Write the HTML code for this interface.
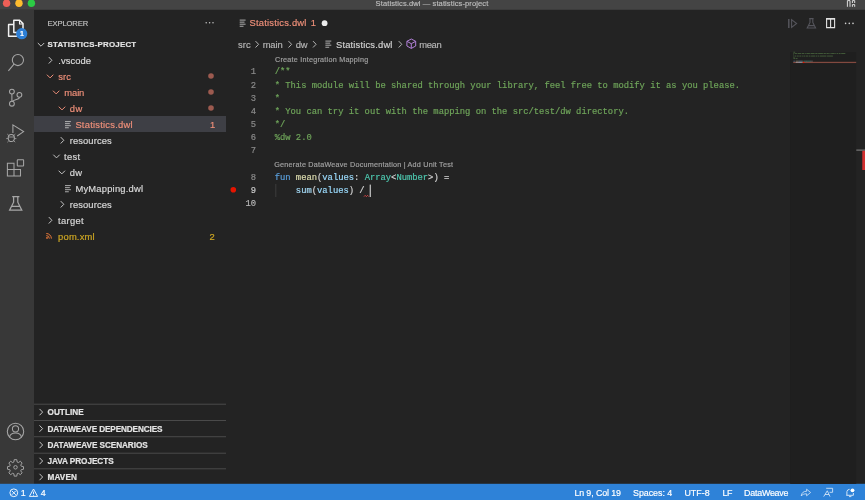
<!DOCTYPE html>
<html><head><meta charset="utf-8">
<style>
*{margin:0;padding:0;box-sizing:border-box}
html,body{width:865px;height:500px;overflow:hidden;background:#232323}
body{position:relative;font-family:"Liberation Sans",sans-serif;font-size:9.4px;color:#ccc}
.a{position:absolute;white-space:pre;line-height:12px;-webkit-text-stroke:0.18px currentColor}
.m{font-family:"Liberation Mono",monospace}
#tx{position:absolute;left:0;top:0;width:865px;height:500px;will-change:transform}
svg{position:absolute;left:0;top:0}
</style></head><body>
<svg width="865" height="500" viewBox="0 0 865 500">
<rect x="0" y="0" width="865" height="9.8" fill="#444444"/>
<rect x="0" y="9.8" width="34" height="475" fill="#383838"/>
<rect x="34" y="116" width="192" height="16" fill="#3e3f45"/>
<rect x="0" y="483.8" width="865" height="16.2" fill="#2e82d8"/>
<rect x="790.2" y="52" width="66" height="431.8" fill="#1f1f1f"/>
<circle cx="6.6" cy="3.2" r="3.7" fill="#ee5f57"/>
<circle cx="19" cy="3.2" r="3.7" fill="#fdbc2e"/>
<circle cx="31.4" cy="3.2" r="3.7" fill="#2ccb45"/>
<path d="M847.4 6.8V0.6H850V6.8 M852.4 6.8V4.6H854.7V6.8 M852.4 3V0.6H854.7V3" fill="none" stroke="#dcdcdc" stroke-width="1"/>
<circle cx="206.2" cy="22.8" r="0.75" fill="#c5c5c5"/>
<circle cx="209.6" cy="22.8" r="0.75" fill="#c5c5c5"/>
<circle cx="213" cy="22.8" r="0.75" fill="#c5c5c5"/>
<path d="M37.8 43.0L41 46.2L44.2 43.0" fill="none" stroke="#c5c5c5" stroke-width="1.0"/>
<path d="M48.8 57.099999999999994L51.9 60.3L48.8 63.5" fill="none" stroke="#c5c5c5" stroke-width="1.0"/>
<path d="M46.9 74.7L50.1 77.89999999999999L53.300000000000004 74.7" fill="none" stroke="#ee8f79" stroke-width="1.0"/>
<path d="M53.0 90.7L56.2 93.89999999999999L59.400000000000006 90.7" fill="none" stroke="#ee8f79" stroke-width="1.0"/>
<path d="M58.8 106.7L62 109.89999999999999L65.2 106.7" fill="none" stroke="#ee8f79" stroke-width="1.0"/>
<path d="M65 121.6H70.9 M65 123.64999999999999H69.8 M65 125.7H70.9 M65 127.75H68.8" fill="none" stroke="#c5c5c5" stroke-width="0.85"/>
<path d="M60.7 137.10000000000002L63.800000000000004 140.3L60.7 143.5" fill="none" stroke="#c5c5c5" stroke-width="1.0"/>
<path d="M53.3 154.70000000000002L56.5 157.9L59.7 154.70000000000002" fill="none" stroke="#c5c5c5" stroke-width="1.0"/>
<path d="M58.599999999999994 170.70000000000002L61.8 173.9L65.0 170.70000000000002" fill="none" stroke="#c5c5c5" stroke-width="1.0"/>
<path d="M65 185.60000000000002H70.9 M65 187.65H69.8 M65 189.70000000000002H70.9 M65 191.75H68.8" fill="none" stroke="#c5c5c5" stroke-width="0.85"/>
<path d="M60.7 201.10000000000002L63.800000000000004 204.3L60.7 207.5" fill="none" stroke="#c5c5c5" stroke-width="1.0"/>
<path d="M48.8 217.10000000000002L51.9 220.3L48.8 223.5" fill="none" stroke="#c5c5c5" stroke-width="1.0"/>
<circle cx="47" cy="237.9" r="0.9" fill="#e8793a"/><path d="M46.3 235.6A3 3 0 0 1 49.3 238.6 M46.3 233.5A5.1 5.1 0 0 1 51.4 238.6" fill="none" stroke="#e8793a" stroke-width="1"/>
<circle cx="211" cy="76" r="2.8" fill="#9c5a4f"/>
<circle cx="211" cy="92" r="2.8" fill="#9c5a4f"/>
<circle cx="211" cy="108" r="2.8" fill="#9c5a4f"/>
<rect x="34" y="403.7" width="192" height="1" fill="#4a4a4a"/>
<path d="M39.5 408.90000000000003L42.6 412.1L39.5 415.3" fill="none" stroke="#c5c5c5" stroke-width="1.0"/>
<rect x="34" y="420.0" width="192" height="1" fill="#4a4a4a"/>
<path d="M39.5 425.40000000000003L42.6 428.6L39.5 431.8" fill="none" stroke="#c5c5c5" stroke-width="1.0"/>
<rect x="34" y="436.2" width="192" height="1" fill="#4a4a4a"/>
<path d="M39.5 441.8L42.6 445L39.5 448.2" fill="none" stroke="#c5c5c5" stroke-width="1.0"/>
<rect x="34" y="452.7" width="192" height="1" fill="#4a4a4a"/>
<path d="M39.5 457.8L42.6 461L39.5 464.2" fill="none" stroke="#c5c5c5" stroke-width="1.0"/>
<rect x="34" y="468.3" width="192" height="1" fill="#4a4a4a"/>
<path d="M39.5 473.8L42.6 477L39.5 480.2" fill="none" stroke="#c5c5c5" stroke-width="1.0"/>
<g fill="none" stroke="#f2f2f2" stroke-width="1.5" stroke-linejoin="round">
<path d="M13.8 20.3H19.7L23 23.6V32.6H13.8Z"/><path d="M19.5 20.5V24H22.8" stroke-width="1.1"/>
<path d="M13.6 24.5H8.6V36.2H17.3V32.9"/></g>
<circle cx="21.7" cy="33.7" r="5.6" fill="#2d7fd6"/>
<g fill="none" stroke="#a6a6a6" stroke-width="1.05">
<circle cx="17.9" cy="60" r="5.6"/><path d="M14 64.2L8.4 70.8"/>
<circle cx="11.9" cy="91.6" r="2.4"/><circle cx="19.4" cy="94.8" r="2.4"/><circle cx="11.9" cy="103.7" r="2.4"/>
<path d="M11.9 94V101.3 M19.4 97.2C19.4 100 15 99 12.5 101.4"/>
<path d="M12.9 133V124.9L23.6 131.6L17.2 136"/>
<ellipse cx="11.3" cy="138" rx="3.1" ry="3.6"/><path d="M8.4 137H14.2 M8.2 138.6H6.2 M14.4 138.6H16.4 M8.8 135.5L7.3 134.1 M13.8 135.5L15.3 134.1 M8.8 140.8L7.4 142.2 M13.8 140.8L15.2 142.2" stroke-width="0.8"/>
<path d="M7.4 163.3H14V169.5H20.5V176H7.4Z M7.4 169.5H14V176"/>
<rect x="17.3" y="159.8" width="6.3" height="6.2" rx="0.5"/>
<path d="M12.2 196.6H19.4 M13.6 196.6V202.2L9.6 210.2H21.8L17.8 202.2V196.6 M11.5 206.4H19.9" stroke-width="1.25"/>
<circle cx="15.5" cy="431.5" r="8.2"/><circle cx="15.5" cy="428.8" r="3.1"/><path d="M9.6 437.2C10.4 431.6 20.6 431.6 21.4 437.2"/>
<g transform="translate(15.5 467.3) scale(0.92) translate(-15.5 -467)"><circle cx="15.5" cy="467" r="1.9"/>
<path d="M14.1 458.7H16.9L17.3 461.3L18.6 461.9L20.8 460.4L22.7 462.4L21.2 464.6L21.7 465.8L24.2 466.3V469.1L21.7 469.6L21.2 470.9L22.7 473L20.8 475L18.6 473.5L17.3 474L16.9 476.6H14.1L13.7 474L12.4 473.5L10.2 475L8.3 473L9.8 470.9L9.3 469.6L6.8 469.1V466.3L9.3 465.8L9.8 464.6L8.3 462.4L10.2 460.4L12.4 461.9L13.7 461.3Z" stroke-width="1.05"/></g>
</g>
<g fill="none" stroke="#fff" stroke-width="0.9">
<circle cx="13.8" cy="492.8" r="3.9"/><path d="M11.8 490.8L15.8 494.8 M15.8 490.8L11.8 494.8"/>
<path d="M33.5 489L37.6 496.4H29.4Z M33.5 491.6V494 M33.5 494.8V495.6"/>
<g opacity="0.82"><path d="M801.2 496C801.6 492.8 803.4 491.3 806.6 491.3V489.2L810.6 492.5L806.6 495.8V493.8C804 493.8 802.4 494.4 801.2 496Z" stroke-width="0.8"/>
<path d="M826.2 488.3H832.6V492.3H829.6 M827.3 490.8L823.7 496.6 M827.3 490.8L830 496.6 M825 494.5H829" stroke-width="0.85"/>
<path d="M846.9 495.3V491.6A3 2.6 0 0 1 849.6 489.3 M853.4 493V495.3H846.3 M849 496.6H851.4" stroke-width="0.95"/></g>
</g><circle cx="852.5" cy="490.3" r="1.9" fill="#fff"/>
<path d="M239.7 20.1H245.6 M239.7 22.150000000000002H244.5 M239.7 24.2H245.6 M239.7 26.25H243.5" fill="none" stroke="#c5c5c5" stroke-width="0.85"/>
<circle cx="324.6" cy="23.2" r="2.9" fill="#ececec"/>
<g fill="none" stroke="#55555c" stroke-width="1.1"><path d="M788.8 19V27.9" stroke-width="1.5"/><path d="M791.6 19.6L796.6 23.5L791.6 27.4Z"/><path d="M809.2 18.6H813.6 M810 18.6V22.4L807.2 28H815.6L812.8 22.4V18.6 M808.3 25.6H814.5"/></g>
<path d="M826.6 18.6H834.6V27.6H826.6Z M830.6 18.6V27.6" fill="none" stroke="#e2e2e2" stroke-width="1.1"/><path d="M826.6 18.9H834.6" stroke="#e2e2e2" stroke-width="1.4"/>
<circle cx="845.6" cy="23.4" r="0.8" fill="#d0d0d0"/>
<circle cx="849.3" cy="23.4" r="0.8" fill="#d0d0d0"/>
<circle cx="853" cy="23.4" r="0.8" fill="#d0d0d0"/>
<path d="M255.5 41.099999999999994L258.6 44.3L255.5 47.5" fill="none" stroke="#b4b4b4" stroke-width="1.0"/>
<path d="M288.5 41.099999999999994L291.6 44.3L288.5 47.5" fill="none" stroke="#b4b4b4" stroke-width="1.0"/>
<path d="M313.0 41.099999999999994L316.1 44.3L313.0 47.5" fill="none" stroke="#b4b4b4" stroke-width="1.0"/>
<path d="M325.4 41.099999999999994H331.29999999999995 M325.4 43.15H330.2 M325.4 45.199999999999996H331.29999999999995 M325.4 47.25H329.2" fill="none" stroke="#c5c5c5" stroke-width="0.85"/>
<path d="M398.7 41.099999999999994L401.8 44.3L398.7 47.5" fill="none" stroke="#b4b4b4" stroke-width="1.0"/>
<path d="M411.3 39L415.7 41.3V46L411.3 48.4L406.9 46V41.3Z M406.9 41.3L411.3 43.7L415.7 41.3 M411.3 43.7V48.4" fill="none" stroke="#b180d7" stroke-width="1"/>
<circle cx="233.3" cy="189.8" r="2.8" fill="#e51400"/>
<rect x="275.3" y="184" width="1" height="13" fill="#3d3d3d"/>
<rect x="369.7" y="184.6" width="1.1" height="12.4" fill="#d8d8d8"/>
<path d="M364 196.6L365.2 195.4L366.4 196.6L367.6 195.4L368.8 196.6" fill="none" stroke="#f14c4c" stroke-width="0.9"/>
<rect x="793.2" y="61.8" width="63" height="1.25" fill="#82493f"/>
<rect x="793.40" y="51.75" width="1.77" height="0.95" fill="#6fa55a" opacity="0.45"/>
<rect x="793.40" y="53.02" width="0.59" height="0.95" fill="#6fa55a" opacity="0.45"/>
<rect x="794.58" y="53.02" width="2.36" height="0.95" fill="#6fa55a" opacity="0.45"/>
<rect x="797.53" y="53.02" width="3.54" height="0.95" fill="#6fa55a" opacity="0.45"/>
<rect x="801.66" y="53.02" width="2.36" height="0.95" fill="#6fa55a" opacity="0.45"/>
<rect x="804.61" y="53.02" width="1.18" height="0.95" fill="#6fa55a" opacity="0.45"/>
<rect x="806.38" y="53.02" width="3.54" height="0.95" fill="#6fa55a" opacity="0.45"/>
<rect x="810.51" y="53.02" width="4.13" height="0.95" fill="#6fa55a" opacity="0.45"/>
<rect x="815.23" y="53.02" width="2.36" height="0.95" fill="#6fa55a" opacity="0.45"/>
<rect x="818.18" y="53.02" width="4.72" height="0.95" fill="#6fa55a" opacity="0.45"/>
<rect x="823.49" y="53.02" width="2.36" height="0.95" fill="#6fa55a" opacity="0.45"/>
<rect x="826.44" y="53.02" width="2.36" height="0.95" fill="#6fa55a" opacity="0.45"/>
<rect x="829.39" y="53.02" width="1.18" height="0.95" fill="#6fa55a" opacity="0.45"/>
<rect x="831.16" y="53.02" width="3.54" height="0.95" fill="#6fa55a" opacity="0.45"/>
<rect x="835.29" y="53.02" width="1.18" height="0.95" fill="#6fa55a" opacity="0.45"/>
<rect x="837.06" y="53.02" width="1.18" height="0.95" fill="#6fa55a" opacity="0.45"/>
<rect x="838.83" y="53.02" width="1.77" height="0.95" fill="#6fa55a" opacity="0.45"/>
<rect x="841.19" y="53.02" width="4.13" height="0.95" fill="#6fa55a" opacity="0.45"/>
<rect x="793.40" y="54.30" width="0.59" height="0.95" fill="#6fa55a" opacity="0.45"/>
<rect x="793.40" y="55.58" width="0.59" height="0.95" fill="#6fa55a" opacity="0.45"/>
<rect x="794.58" y="55.58" width="1.77" height="0.95" fill="#6fa55a" opacity="0.45"/>
<rect x="796.94" y="55.58" width="1.77" height="0.95" fill="#6fa55a" opacity="0.45"/>
<rect x="799.30" y="55.58" width="1.77" height="0.95" fill="#6fa55a" opacity="0.45"/>
<rect x="801.66" y="55.58" width="1.18" height="0.95" fill="#6fa55a" opacity="0.45"/>
<rect x="803.43" y="55.58" width="1.77" height="0.95" fill="#6fa55a" opacity="0.45"/>
<rect x="805.79" y="55.58" width="2.36" height="0.95" fill="#6fa55a" opacity="0.45"/>
<rect x="808.74" y="55.58" width="1.77" height="0.95" fill="#6fa55a" opacity="0.45"/>
<rect x="811.10" y="55.58" width="4.13" height="0.95" fill="#6fa55a" opacity="0.45"/>
<rect x="815.82" y="55.58" width="1.18" height="0.95" fill="#6fa55a" opacity="0.45"/>
<rect x="817.59" y="55.58" width="1.77" height="0.95" fill="#6fa55a" opacity="0.45"/>
<rect x="819.95" y="55.58" width="6.49" height="0.95" fill="#6fa55a" opacity="0.45"/>
<rect x="827.03" y="55.58" width="5.90" height="0.95" fill="#6fa55a" opacity="0.45"/>
<rect x="793.40" y="56.85" width="1.18" height="0.95" fill="#6fa55a" opacity="0.45"/>
<rect x="793.40" y="58.12" width="1.77" height="0.95" fill="#6fa55a" opacity="0.45"/>
<rect x="795.76" y="58.12" width="1.77" height="0.95" fill="#6fa55a" opacity="0.45"/>
<rect x="793.40" y="60.67" width="1.77" height="0.95" fill="#5a9fdc" opacity="0.45"/>
<rect x="795.76" y="60.67" width="2.36" height="0.95" fill="#dedeb0" opacity="0.45"/>
<rect x="798.12" y="60.67" width="0.59" height="0.95" fill="#d4d4d4" opacity="0.45"/>
<rect x="798.71" y="60.67" width="3.54" height="0.95" fill="#9cdcfe" opacity="0.45"/>
<rect x="802.25" y="60.67" width="0.59" height="0.95" fill="#d4d4d4" opacity="0.45"/>
<rect x="803.43" y="60.67" width="2.95" height="0.95" fill="#4ec9b0" opacity="0.45"/>
<rect x="806.38" y="60.67" width="0.59" height="0.95" fill="#d4d4d4" opacity="0.45"/>
<rect x="806.97" y="60.67" width="3.54" height="0.95" fill="#4ec9b0" opacity="0.45"/>
<rect x="810.51" y="60.67" width="1.18" height="0.95" fill="#d4d4d4" opacity="0.45"/>
<rect x="812.28" y="60.67" width="0.59" height="0.95" fill="#d4d4d4" opacity="0.45"/>
<rect x="795.76" y="61.95" width="1.77" height="0.95" fill="#a6dcf8" opacity="0.45"/>
<rect x="797.53" y="61.95" width="0.59" height="0.95" fill="#d4d4d4" opacity="0.45"/>
<rect x="798.12" y="61.95" width="3.54" height="0.95" fill="#9cdcfe" opacity="0.45"/>
<rect x="801.66" y="61.95" width="0.59" height="0.95" fill="#d4d4d4" opacity="0.45"/>
<rect x="802.84" y="61.95" width="0.59" height="0.95" fill="#d4d4d4" opacity="0.45"/>
<rect x="803" y="61.8" width="1.3" height="1.25" fill="#e51400"/>
<rect x="856.3" y="149.6" width="8.7" height="1" fill="#8a8a8a"/><rect x="862.3" y="150.8" width="2.7" height="19.2" fill="#d22f2f"/>
</svg>
<div id="tx">
<div class="a" style="top:-2.00px;font-size:7.5px;color:#bcbcbc;left:375.60px;letter-spacing:0.114px;">Statistics.dwl — statistics-project</div>
<div class="a" style="top:18.00px;font-size:7.6px;color:#c0c0c0;left:47.50px;letter-spacing:-0.101px;">EXPLORER</div>
<div class="a" style="top:39.00px;font-size:7.9px;color:#e4e4e4;font-weight:bold;left:47.50px;letter-spacing:0.231px;">STATISTICS-PROJECT</div>
<div class="a" style="top:55.00px;font-size:9.4px;color:#d8d8d8;left:58.30px;letter-spacing:0.060px;">.vscode</div>
<div class="a" style="top:71.00px;font-size:9.4px;color:#ee8f79;left:58.30px;letter-spacing:0.080px;">src</div>
<div class="a" style="top:87.00px;font-size:9.4px;color:#ee8f79;left:64.30px;letter-spacing:-0.094px;">main</div>
<div class="a" style="top:103.00px;font-size:9.4px;color:#ee8f79;left:69.70px;letter-spacing:0.544px;">dw</div>
<div class="a" style="top:119.00px;font-size:9.4px;color:#ee8f79;left:75.40px;letter-spacing:0.231px;">Statistics.dwl</div>
<div class="a" style="top:135.00px;font-size:9.4px;color:#d8d8d8;left:69.70px;letter-spacing:0.109px;">resources</div>
<div class="a" style="top:151.00px;font-size:9.4px;color:#d8d8d8;left:64.10px;letter-spacing:0.307px;">test</div>
<div class="a" style="top:167.00px;font-size:9.4px;color:#d8d8d8;left:69.70px;letter-spacing:0.277px;">dw</div>
<div class="a" style="top:183.00px;font-size:9.4px;color:#d8d8d8;left:75.40px;letter-spacing:0.213px;">MyMapping.dwl</div>
<div class="a" style="top:199.00px;font-size:9.4px;color:#d8d8d8;left:69.70px;letter-spacing:0.109px;">resources</div>
<div class="a" style="top:215.00px;font-size:9.4px;color:#d8d8d8;left:58.10px;letter-spacing:0.294px;">target</div>
<div class="a" style="top:231.00px;font-size:9.4px;color:#cfa823;left:58.10px;letter-spacing:0.181px;">pom.xml</div>
<div class="a" style="top:119.00px;font-size:9.4px;color:#ee8f79;left:210.10px;">1</div>
<div class="a" style="top:231.00px;font-size:9.4px;color:#cfa823;left:209.50px;">2</div>
<div class="a" style="top:407.00px;font-size:8.2px;color:#e4e4e4;font-weight:bold;left:47.50px;letter-spacing:0.040px;">OUTLINE</div>
<div class="a" style="top:424.00px;font-size:8.2px;color:#e4e4e4;font-weight:bold;left:47.50px;letter-spacing:-0.110px;">DATAWEAVE DEPENDENCIES</div>
<div class="a" style="top:440.00px;font-size:8.2px;color:#e4e4e4;font-weight:bold;left:47.50px;letter-spacing:-0.072px;">DATAWEAVE SCENARIOS</div>
<div class="a" style="top:456.00px;font-size:8.2px;color:#e4e4e4;font-weight:bold;left:47.50px;letter-spacing:-0.051px;">JAVA PROJECTS</div>
<div class="a" style="top:472.00px;font-size:8.2px;color:#e4e4e4;font-weight:bold;left:47.50px;letter-spacing:0.118px;">MAVEN</div>
<div class="a" style="top:28.00px;font-size:7px;color:#ffffff;font-weight:bold;left:19.90px;">1</div>
<div class="a" style="top:487.00px;font-size:8.9px;color:#ffffff;left:20.70px;">1</div>
<div class="a" style="top:487.00px;font-size:8.9px;color:#ffffff;left:40.70px;">4</div>
<div class="a" style="top:487.00px;font-size:8.9px;color:#ffffff;left:574.40px;letter-spacing:-0.118px;">Ln 9, Col 19</div>
<div class="a" style="top:487.00px;font-size:8.9px;color:#ffffff;left:633.00px;letter-spacing:-0.033px;">Spaces: 4</div>
<div class="a" style="top:487.00px;font-size:8.9px;color:#ffffff;left:684.40px;letter-spacing:0.032px;">UTF-8</div>
<div class="a" style="top:487.00px;font-size:8.9px;color:#ffffff;left:722.50px;letter-spacing:-0.350px;">LF</div>
<div class="a" style="top:487.00px;font-size:8.9px;color:#ffffff;left:744.00px;letter-spacing:-0.214px;">DataWeave</div>
<div class="a" style="top:17.00px;font-size:9.4px;color:#ee8f79;left:249.50px;letter-spacing:0.208px;">Statistics.dwl</div>
<div class="a" style="top:17.00px;font-size:9.4px;color:#ee8f79;left:310.70px;">1</div>
<div class="a" style="top:39.00px;font-size:9.4px;color:#b4b4b4;left:238.10px;letter-spacing:0.000px;">src</div>
<div class="a" style="top:39.00px;font-size:9.4px;color:#b4b4b4;left:262.70px;letter-spacing:-0.122px;">main</div>
<div class="a" style="top:39.00px;font-size:9.4px;color:#b4b4b4;left:295.80px;letter-spacing:-0.323px;">dw</div>
<div class="a" style="top:39.00px;font-size:9.4px;color:#d0d0d0;left:336.00px;letter-spacing:0.171px;">Statistics.dwl</div>
<div class="a" style="top:39.00px;font-size:9.4px;color:#b4b4b4;left:419.20px;letter-spacing:-0.301px;">mean</div>
<div class="a" style="top:54.00px;font-size:7.2px;color:#a0a0a0;left:275.00px;letter-spacing:0.243px;">Create Integration Mapping</div>
<div class="a" style="top:159.00px;font-size:7.2px;color:#a0a0a0;left:274.30px;letter-spacing:0.231px;">Generate DataWeave Documentation | Add Unit Test</div>
<div class="a m" style="top:66.00px;font-size:8.82px;color:#6fa55a;left:274.70px;">/**</div>
<div class="a m" style="top:80.00px;font-size:8.82px;color:#6fa55a;left:274.70px;">* This module will be shared through your library, feel free to modify it as you please.</div>
<div class="a m" style="top:93.00px;font-size:8.82px;color:#6fa55a;left:274.70px;">*</div>
<div class="a m" style="top:106.00px;font-size:8.82px;color:#6fa55a;left:274.70px;">* You can try it out with the mapping on the src/test/dw directory.</div>
<div class="a m" style="top:119.00px;font-size:8.82px;color:#6fa55a;left:274.70px;">*/</div>
<div class="a m" style="top:132.00px;font-size:8.82px;color:#6fa55a;left:274.70px;">%dw 2.0</div>
<div class="a m" style="top:172.00px;font-size:8.82px;color:#d4d4d4;left:274.70px;"><span style="color:#5a9fdc">fun</span> <span style="color:#dedeb0">mean</span>(<span style="color:#9cdcfe">values</span>: <span style="color:#4ec9b0">Array</span>&lt;<span style="color:#4ec9b0">Number</span>&gt;) =</div>
<div class="a m" style="top:185.00px;font-size:8.82px;color:#d4d4d4;left:274.70px;">    <span style="color:#a6dcf8">sum</span>(<span style="color:#9cdcfe">values</span>) /</div>
<div class="a m" style="top:66.00px;font-size:8.82px;color:#8a8a8a;right:609.00px;">1</div>
<div class="a m" style="top:80.00px;font-size:8.82px;color:#8a8a8a;right:609.00px;">2</div>
<div class="a m" style="top:93.00px;font-size:8.82px;color:#8a8a8a;right:609.00px;">3</div>
<div class="a m" style="top:106.00px;font-size:8.82px;color:#8a8a8a;right:609.00px;">4</div>
<div class="a m" style="top:119.00px;font-size:8.82px;color:#8a8a8a;right:609.00px;">5</div>
<div class="a m" style="top:132.00px;font-size:8.82px;color:#8a8a8a;right:609.00px;">6</div>
<div class="a m" style="top:145.00px;font-size:8.82px;color:#8a8a8a;right:609.00px;">7</div>
<div class="a m" style="top:172.00px;font-size:8.82px;color:#8a8a8a;right:609.00px;">8</div>
<div class="a m" style="top:185.00px;font-size:8.82px;color:#cccccc;right:609.00px;">9</div>
<div class="a m" style="top:198.00px;font-size:8.82px;color:#b8b8b8;right:609.00px;">10</div>
</div>
</body></html>
